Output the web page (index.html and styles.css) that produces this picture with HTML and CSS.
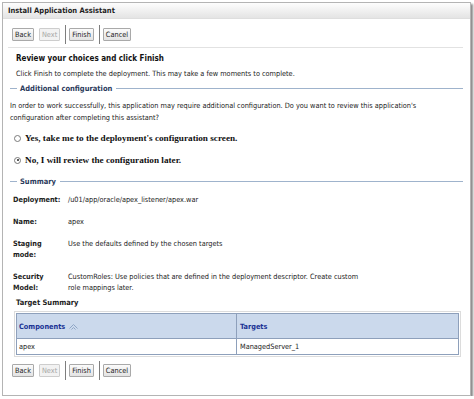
FILE: index.html
```html
<!DOCTYPE html>
<html lang="en">
<head>
    <meta charset="UTF-8">
    <title>Install Application Assistant</title>
    <link rel="stylesheet" href="styles.css">
</head>
<body>
    <div class="panel">
        <div class="title-bar">Install Application Assistant</div>

        <div class="content">
            <div class="toolbar">
                <button class="btn">Back</button>
                <button class="btn" disabled>Next</button>
                <span class="sep"></span>
                <button class="btn">Finish</button>
                <span class="sep"></span>
                <button class="btn">Cancel</button>
            </div>
            <div class="rule"></div>

            <div class="intro">
                <h2>Review your choices and click Finish</h2>
                <p>Click Finish to complete the deployment. This may take a few moments to complete.</p>
            </div>

            <div class="legend"><span class="dash"></span><span class="legend-text">Additional configuration</span><span class="line"></span></div>
            <p class="question">In order to work successfully, this application may require additional configuration. Do you want to review this application's configuration after completing this assistant?</p>

            <label class="choice first"><input type="radio" name="review"> Yes, take me to the deployment's configuration screen.</label>
            <label class="choice"><input type="radio" name="review" checked> No, I will review the configuration later.</label>

            <div class="legend summary-legend"><span class="dash"></span><span class="legend-text">Summary</span><span class="line"></span></div>

            <div class="summary">
                <div class="key">Deployment:</div><div class="val">/u01/app/oracle/apex_listener/apex.war</div>
                <div class="key">Name:</div><div class="val">apex</div>
                <div class="key">Staging mode:</div><div class="val">Use the defaults defined by the chosen targets</div>
                <div class="key">Security Model:</div><div class="val">CustomRoles: Use policies that are defined in the deployment descriptor. Create custom role mappings later.</div>
            </div>

            <div class="target-title">Target Summary</div>
            <div class="table-wrap">
                <table>
                    <thead>
                        <tr>
                            <th class="col-comp">Components <svg class="sort" width="9" height="7" viewBox="0 0 9 7"><path d="M0.5 5.5 L4.5 1.5 L8.5 5.5" fill="none" stroke="#8fa6c6" stroke-width="1"/><path d="M2.5 6.5 L4.5 4.5 L6.5 6.5" fill="none" stroke="#8fa6c6" stroke-width="1"/></svg></th>
                            <th>Targets</th>
                        </tr>
                    </thead>
                    <tbody>
                        <tr>
                            <td class="col-comp">apex</td>
                            <td>ManagedServer_1</td>
                        </tr>
                    </tbody>
                </table>
            </div>

            <div class="toolbar bottom">
                <button class="btn">Back</button>
                <button class="btn" disabled>Next</button>
                <span class="sep"></span>
                <button class="btn">Finish</button>
                <span class="sep"></span>
                <button class="btn">Cancel</button>
            </div>
        </div>
    </div>
</body>
</html>
```

FILE: styles.css
```css
body { margin: 0; background: #fff; font-family: "DejaVu Sans Condensed", "DejaVu Sans", sans-serif; font-size: 7.3px; color: #222; }
.panel { margin: 2px 0 0 2px; width: 469px; height: 394px; border: 1px solid #b4b4b4; box-shadow: 2px 2px 2px #8a8a8a; box-sizing: border-box; }
.title-bar { height: 15px; line-height: 15px; padding-left: 5px; font-weight: bold; font-size: 7.5px; color: #1f1f1f; background: linear-gradient(#fdfdfd, #e4e4e4); border-bottom: 1px solid #dedede; }
.content { padding: 0 7px; }
.toolbar { display: flex; align-items: center; height: 19px; margin: 6px 0 0 2px; }
.btn { font-family: inherit; font-size: 7.3px; color: #222; background: linear-gradient(#fbfbfb, #e3e3e3); border: 1px solid #a9a9a9; border-radius: 1px; padding: 0 2px; height: 13px; line-height: 11px; margin-right: 5px; }
.btn:disabled { color: #a6a6a6; border-color: #cdcdcd; background: #f2f2f2; }
.sep { width: 1px; height: 19px; background: #7e7e7e; margin-right: 3px; }
.rule { height: 1px; background: #e2e2e2; margin: 3px 0 0 -2px; }
.intro { padding-left: 6px; }
.intro h2 { margin: 5px 0 0; font-size: 8px; line-height: 11px; font-weight: bold; color: #111; }
.intro p { margin: 4px 0 0; line-height: 11px; }
.legend { display: flex; align-items: center; height: 11px; margin-top: 4px; }
.legend .dash { width: 7px; height: 1px; background: #9fb3cc; margin-right: 3px; }
.legend-text { font-weight: bold; font-size: 7.5px; color: #2b3a5b; }
.legend .line { flex: 1; height: 1px; background: #9fb3cc; margin-left: 4px; }
.question { margin: 6px 0 0; line-height: 12px; max-width: 416px; }
.choice { display: flex; align-items: center; height: 12px; font-family: "Liberation Serif", serif; font-weight: bold; font-size: 9.2px; margin: 10px 0 0 4px; color: #111; }
.choice.first { margin-top: 8px; }
.choice input { appearance: none; width: 7px; height: 7px; margin: 0 4px 0 0; border: 1px solid #7a7a7a; border-radius: 50%; background: #fff; box-sizing: border-box; position: relative; }
.choice input:checked::after { content: ""; position: absolute; left: 1.5px; top: 1.5px; width: 2px; height: 2px; border-radius: 50%; background: #222; }
.summary-legend { margin-top: 10px; }
.summary { display: grid; grid-template-columns: 55px 300px; row-gap: 11px; margin: 7px 0 0 3px; line-height: 11px; }
.key { font-weight: bold; color: #222; padding-right: 14px; }
.target-title { font-weight: bold; font-size: 7.5px; line-height: 11px; margin: 4px 0 0 6px; }
.table-wrap { margin: 3px 2px 0 4px; border: 1px solid #dcdcdc; padding: 1px; }
table { width: 100%; border-collapse: separate; border-spacing: 0; border: 1px solid #8ea0bb; }
th { text-align: left; background: #cbd9ec; color: #1a3294; font-weight: bold; height: 24px; padding: 0 2px; border-bottom: 1px solid #8ea0bb; }
td { height: 15px; padding: 0 2px; }
.col-comp { width: 215px; border-right: 1px solid #8ea0bb; }
th:last-child, td:last-child { padding-left: 3px; }
.sort { vertical-align: middle; margin-left: 1px; }
.bottom { margin-top: 4px; }
```
